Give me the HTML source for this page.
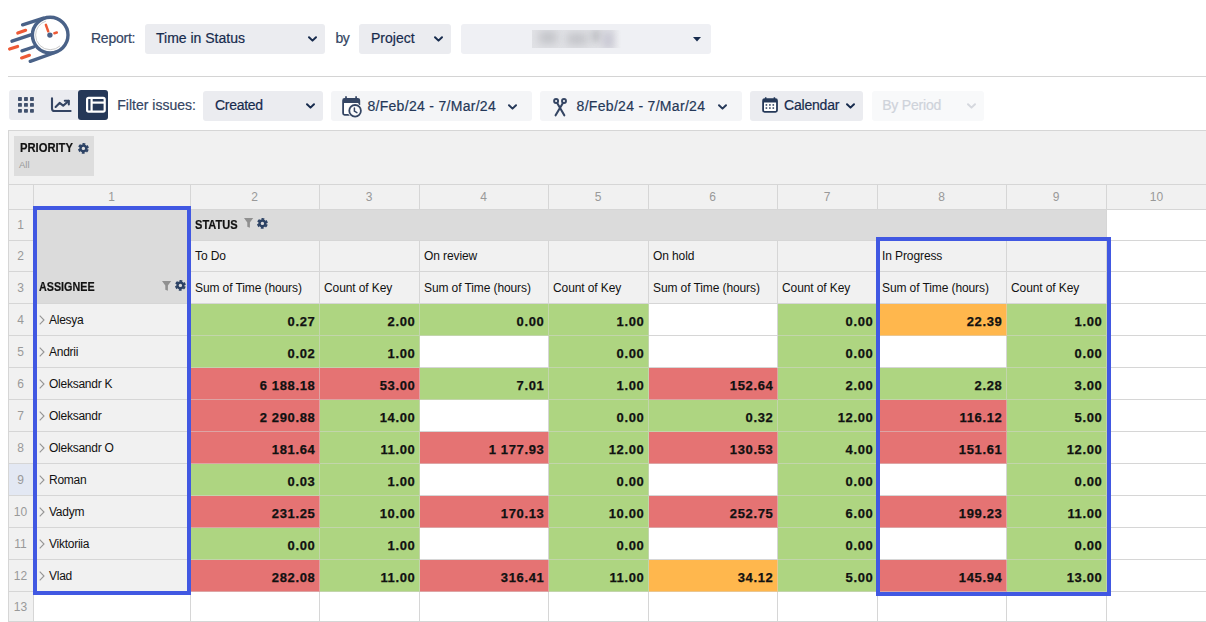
<!DOCTYPE html>
<html lang="en">
<head>
<meta charset="utf-8">
<title>Time in Status report</title>
<style>
html,body{margin:0;padding:0;background:#fff;}
body{width:1206px;height:622px;overflow:hidden;position:relative;font-family:"Liberation Sans",sans-serif;color:#172b4d;}
.t{position:absolute;font-size:14px;line-height:16px;white-space:nowrap;color:#344563;-webkit-text-stroke:.2px currentColor}
.sel1{position:absolute;background:#ebecf0;border-radius:3px;}
.sel2{position:absolute;background:#f4f5f7;border-radius:3px;}
svg{position:absolute;overflow:visible}
#hr{position:absolute;left:8px;top:76px;width:1198px;height:1px;background:#d4d4d4}
#grid{position:absolute;left:8px;top:130px;width:1198px;height:492px;background:#d6d6d6;}
#grid .c{position:absolute;}
.c{position:absolute;box-sizing:border-box;font-size:12px;color:#111;white-space:nowrap;overflow:hidden}
#grid .c{margin-left:-8px;margin-top:-130px}
.num{color:#999;text-align:center;line-height:25px;font-size:12px;text-indent:-1px}
.h{line-height:33px;padding-left:4px;letter-spacing:-0.1px}
.v{font-weight:700;font-size:13px;letter-spacing:.65px;-webkit-text-stroke:.25px #111;text-align:right;padding-right:3.5px;line-height:36px;color:#111}
.nm{line-height:32px}
.nm span{position:absolute;left:15px;top:0;letter-spacing:-0.25px}
.nm .chev{left:5px;top:11px}
.b{-webkit-text-stroke:.2px #111;font-weight:700;position:absolute;font-size:12.5px;color:#111;transform-origin:0 50%;line-height:14px}
.pri{left:5.6px;top:5.3px;transform:scaleX(.896)}
.all{position:absolute;left:5px;top:23px;font-size:9.5px;color:#999}
.asg{left:4.6px;top:70.3px;transform:scaleX(.86)}
.sts{left:4.3px;top:8.3px;transform:scaleX(.885)}
.sel{position:absolute;box-sizing:border-box;border:4px solid #4158e2}
</style>
</head>
<body>
<svg width="0" height="0" style="position:absolute"><defs>
<g id="gear"><circle cx="12" cy="12" r="6.5" fill="none" stroke="#2c4264" stroke-width="5.4"/><circle cx="12" cy="12" r="10.1" fill="none" stroke="#2c4264" stroke-width="3.8" stroke-dasharray="6.2 4.376" stroke-dashoffset="-2.19"/></g>
<path id="flt" d="M0 0H9.2L5.9 4.6V9.7L3.3 8.7V4.6Z" fill="#909090"/>
<path id="chv" d="M1 1.2L4.5 4.6L8 1.2" fill="none" stroke-width="2" stroke-linecap="round" stroke-linejoin="round"/>
</defs></svg>

<!-- logo -->
<svg id="logo" style="left:0;top:0" width="80" height="76" viewBox="0 0 80 76">
 <g fill="none" stroke="#4a6288" stroke-width="3.4" stroke-linecap="round">
  <circle cx="50.2" cy="35.1" r="17.8"/>
  <path d="M22.6 24.8L43.5 18.2"/>
  <path d="M12 41.2L31.5 34.6"/>
  <path d="M22 50.8L33.5 47"/>
  <path d="M30.2 61.3L55 52.5"/>
 </g>
 <circle cx="50.2" cy="35.1" r="14.6" fill="none" stroke="#bdbdbd" stroke-width="0.8" stroke-dasharray="52 40" stroke-dashoffset="-12"/>
 <g fill="none" stroke="#ee5a36" stroke-width="3.2" stroke-linecap="round">
  <path d="M17.8 33.1L25.6 30.3"/>
  <path d="M9.6 49.1L17.6 46.4"/>
  <path d="M21.6 57.9L29.4 55.3"/>
 </g>
 <g fill="none" stroke="#ee5a36" stroke-width="2.5" stroke-linecap="round">
  <path d="M45.9 24.9L48.2 31.3"/>
  <path d="M54.4 33.2L56.8 32.5"/>
 </g>
 <circle cx="49.9" cy="35.1" r="2.7" fill="#4a6288"/>
</svg>

<div class="t" style="left:91px;top:30px;letter-spacing:-.25px">Report:</div>
<div class="sel1" style="left:145px;top:24px;width:179.5px;height:29.5px"></div>
<div class="t" style="left:156px;top:30px;color:#172b4d">Time in Status</div>
<svg style="left:307.5px;top:35.5px" width="9" height="6" viewBox="0 0 9 6"><use href="#chv" stroke="#172b4d"/></svg>
<div class="t" style="left:335.5px;top:30px;letter-spacing:-.5px">by</div>
<div class="sel1" style="left:359px;top:24px;width:92px;height:29.5px"></div>
<div class="t" style="left:371px;top:30px;color:#172b4d">Project</div>
<svg style="left:434px;top:35.5px" width="9" height="6" viewBox="0 0 9 6"><use href="#chv" stroke="#172b4d"/></svg>
<div class="sel1" style="left:461px;top:24px;width:250px;height:29.5px;background:#eff0f4"></div>
<div style="position:absolute;left:532px;top:30px;width:89px;height:18px;overflow:hidden;background:linear-gradient(90deg,#e1e2e6 0,#e1e2e6 90%,#eff0f4 100%)">
<div style="position:absolute;left:7px;top:1px;width:18px;height:13px;background:#c3c4c9;filter:blur(4px)"></div>
<div style="position:absolute;left:35px;top:3px;width:20px;height:12px;background:#c3c4c9;filter:blur(4px)"></div>
<div style="position:absolute;left:59px;top:0px;width:10px;height:12px;background:#c0c1c6;filter:blur(3.5px)"></div>
<div style="position:absolute;left:71px;top:2px;width:10px;height:16px;background:#c9c8d4;filter:blur(3.5px)"></div>
</div>
<svg style="left:692.5px;top:37px" width="8" height="4.4" viewBox="0 0 8 4.4"><path d="M0 0H8L4 4.4Z" fill="#172b4d"/></svg>

<div id="hr"></div>

<!-- toolbar row 2 -->
<div class="sel1" style="left:9px;top:90px;width:99px;height:30px"></div>
<div style="position:absolute;left:78px;top:90px;width:30px;height:30px;background:#253858;border-radius:3px"></div>
<svg style="left:18.2px;top:97.2px" width="16" height="16" viewBox="0 0 16 16"><g fill="#42526e">
<rect x="0" y="0" width="3.9" height="3.9" rx=".7"/><rect x="6" y="0" width="3.9" height="3.9" rx=".7"/><rect x="12" y="0" width="3.9" height="3.9" rx=".7"/>
<rect x="0" y="5.95" width="3.9" height="3.9" rx=".7"/><rect x="6" y="5.95" width="3.9" height="3.9" rx=".7"/><rect x="12" y="5.95" width="3.9" height="3.9" rx=".7"/>
<rect x="0" y="11.9" width="3.9" height="3.9" rx=".7"/><rect x="6" y="11.9" width="3.9" height="3.9" rx=".7"/><rect x="12" y="11.9" width="3.9" height="3.9" rx=".7"/></g></svg>
<svg style="left:50px;top:96px" width="24" height="18" viewBox="50 96 24 18"><g fill="none" stroke="#344563" stroke-width="2.1" stroke-linecap="round" stroke-linejoin="round">
<path d="M52 98.2V108.4Q52 111 54.6 111H70.6"/><path d="M55.6 107L59.6 102.9L63.2 105.7L68.6 100.9"/><path d="M64.8 100.8H68.8V104.4"/></g></svg>
<svg style="left:84px;top:95px" width="24" height="20" viewBox="84 95 24 20"><g fill="none" stroke="#fff" stroke-width="2.2">
<rect x="87.1" y="97.9" width="17.6" height="13.7" rx="1.6"/><path d="M91.6 98V111.6"/><path d="M91.6 102.6H104.7"/></g></svg>

<div class="t" style="left:117.3px;top:97px">Filter issues:</div>
<div class="sel1" style="left:203px;top:91px;width:120px;height:29.5px"></div>
<div class="t" style="left:215px;top:97px;color:#172b4d;letter-spacing:-.3px">Created</div>
<svg style="left:306px;top:102.7px" width="9" height="6" viewBox="0 0 9 6"><use href="#chv" stroke="#172b4d"/></svg>

<div class="sel2" style="left:331px;top:91px;width:200.5px;height:30px"></div>
<svg style="left:340px;top:94px" width="26" height="26" viewBox="340 94 26 26"><g fill="none" stroke="#344563" stroke-width="1.8" stroke-linejoin="round">
<rect x="343.1" y="98.9" width="16.2" height="15.9" rx="1.5" fill="#fff" stroke="none"/><path d="M351 114.8H344.6Q343.1 114.8 343.1 113.3V100.4Q343.1 98.9 344.6 98.9H357.8Q359.3 98.9 359.3 100.4V105"/>
<path d="M346 96.2V99M356.1 96.2V99" stroke-width="1.7"/>
<path d="M343.1 101H359.3" stroke-width="4"/>
<circle cx="355.1" cy="110.8" r="7.4" fill="#f4f5f7" stroke="none"/><circle cx="355.1" cy="110.8" r="5.8" fill="#fbfbfc"/>
<path d="M354.4 108V111.2L356.9 112.6" stroke-width="1.5" stroke-linecap="round"/></g></svg>
<div class="t" style="left:367.4px;top:97.5px;letter-spacing:.3px;color:#253858">8/Feb/24 - 7/Mar/24</div>
<svg style="left:508px;top:104.4px" width="9" height="6" viewBox="0 0 9 6"><use href="#chv" stroke="#253858"/></svg>

<div class="sel2" style="left:540px;top:91px;width:202px;height:30px"></div>
<svg style="left:550px;top:95px" width="20" height="24" viewBox="550 95 20 24"><g fill="none" stroke="#344563" stroke-linecap="round">
<circle cx="556.1" cy="101" r="2" stroke-width="1.9"/><circle cx="564" cy="101" r="2" stroke-width="1.9"/>
<path d="M557.3 103.3L564.3 115.3M562.8 103.3L555.6 115.3" stroke-width="2.1"/></g></svg>
<div class="t" style="left:576.6px;top:97.5px;letter-spacing:.3px;color:#253858">8/Feb/24 - 7/Mar/24</div>
<svg style="left:717.6px;top:104.4px" width="9" height="6" viewBox="0 0 9 6"><use href="#chv" stroke="#253858"/></svg>

<div class="sel1" style="left:750px;top:91px;width:113px;height:30px"></div>
<svg style="left:760px;top:95px" width="20" height="20" viewBox="760 95 20 20"><g fill="none" stroke="#253858" stroke-width="1.8" stroke-linejoin="round">
<rect x="763.1" y="99.2" width="13.9" height="12.6" rx="1.5" fill="#fff"/><path d="M763.1 100.9H777" stroke-width="3.2"/><path d="M765.7 97.2V99.4M774.4 97.2V99.4" stroke-width="1.5"/></g>
<g fill="#253858"><rect x="765.6" y="104.2" width="1.6" height="1.5"/><rect x="769.1" y="104.2" width="1.6" height="1.5"/><rect x="772.5" y="104.2" width="1.6" height="1.5"/>
<rect x="765.6" y="107.3" width="1.6" height="1.5"/><rect x="769.1" y="107.3" width="1.6" height="1.5"/><rect x="772.5" y="107.3" width="1.6" height="1.5"/></g></svg>
<div class="t" style="left:784px;top:96.5px;color:#172b4d;letter-spacing:-.2px">Calendar</div>
<svg style="left:846px;top:102.7px" width="9" height="6" viewBox="0 0 9 6"><use href="#chv" stroke="#172b4d"/></svg>

<div class="sel2" style="left:871.5px;top:91px;width:112px;height:30px;background:#f8f9fa"></div>
<div class="t" style="left:882.2px;top:96.5px;color:#cfd3da;letter-spacing:-.2px">By Period</div>
<svg style="left:966.5px;top:102.7px" width="9" height="6" viewBox="0 0 9 6"><use href="#chv" stroke="#d5d8de"/></svg>

<div id="grid">
<div class="c " style="left:9px;top:131px;width:1200px;height:53px;background:#f1f1f1;"></div>
<div class="c chip" style="left:14px;top:136px;width:80px;height:40px;background:#dddddd;"><span class="b pri">PRIORITY</span><svg class="gear" style="left:64.1px;top:7px" width="10.8" height="10.8" viewBox="0 0 24 24"><use href="#gear"/></svg><span class="all">All</span></div>
<div class="c " style="left:9px;top:185px;width:24px;height:24px;background:#f1f1f1;"></div>
<div class="c num" style="left:34px;top:185px;width:156px;height:24px;background:#f1f1f1;">1</div>
<div class="c num" style="left:191px;top:185px;width:128px;height:24px;background:#f1f1f1;">2</div>
<div class="c num" style="left:320px;top:185px;width:99px;height:24px;background:#f1f1f1;">3</div>
<div class="c num" style="left:420px;top:185px;width:128px;height:24px;background:#f1f1f1;">4</div>
<div class="c num" style="left:549px;top:185px;width:99px;height:24px;background:#f1f1f1;">5</div>
<div class="c num" style="left:649px;top:185px;width:128px;height:24px;background:#f1f1f1;">6</div>
<div class="c num" style="left:778px;top:185px;width:99px;height:24px;background:#f1f1f1;">7</div>
<div class="c num" style="left:878px;top:185px;width:128px;height:24px;background:#f1f1f1;">8</div>
<div class="c num" style="left:1007px;top:185px;width:99px;height:24px;background:#f1f1f1;">9</div>
<div class="c num" style="left:1107px;top:185px;width:100px;height:24px;background:#f1f1f1;">10</div>
<div class="c num rn" style="left:9px;top:210px;width:24px;height:30px;background:#f1f1f1;line-height:31px">1</div>
<div class="c num rn" style="left:9px;top:241px;width:24px;height:30px;background:#f1f1f1;line-height:31px">2</div>
<div class="c num rn" style="left:9px;top:272px;width:24px;height:31px;background:#f1f1f1;line-height:32px">3</div>
<div class="c num rn" style="left:9px;top:304px;width:24px;height:31px;background:#f1f1f1;line-height:32px">4</div>
<div class="c num rn" style="left:9px;top:336px;width:24px;height:31px;background:#f1f1f1;line-height:32px">5</div>
<div class="c num rn" style="left:9px;top:368px;width:24px;height:31px;background:#f1f1f1;line-height:32px">6</div>
<div class="c num rn" style="left:9px;top:400px;width:24px;height:31px;background:#f1f1f1;line-height:32px">7</div>
<div class="c num rn" style="left:9px;top:432px;width:24px;height:31px;background:#f1f1f1;line-height:32px">8</div>
<div class="c num rn" style="left:9px;top:464px;width:24px;height:31px;background:#e3e8f3;line-height:32px">9</div>
<div class="c num rn" style="left:9px;top:496px;width:24px;height:31px;background:#f1f1f1;line-height:32px">10</div>
<div class="c num rn" style="left:9px;top:528px;width:24px;height:31px;background:#f1f1f1;line-height:32px">11</div>
<div class="c num rn" style="left:9px;top:560px;width:24px;height:31px;background:#f1f1f1;line-height:32px">12</div>
<div class="c num rn" style="left:9px;top:592px;width:24px;height:29px;background:#f1f1f1;line-height:30px">13</div>
<div class="c " style="left:34px;top:210px;width:156px;height:93px;background:#dbdbdb;"><span class="b asg">ASSIGNEE</span><svg class="flt" style="left:127.8px;top:70.5px" width="9.2" height="9.7" viewBox="0 0 9.2 9.7"><use href="#flt"/></svg><svg class="gear" style="left:141.1px;top:70.2px" width="10.8" height="10.8" viewBox="0 0 24 24"><use href="#gear"/></svg></div>
<div class="c " style="left:191px;top:210px;width:915px;height:30px;background:#dbdbdb;"><span class="b sts">STATUS</span><svg class="flt" style="left:52.9px;top:8.1px" width="9.2" height="9.7" viewBox="0 0 9.2 9.7"><use href="#flt"/></svg><svg class="gear" style="left:66.4px;top:7.6px" width="10.8" height="10.8" viewBox="0 0 24 24"><use href="#gear"/></svg></div>
<div class="c " style="left:1107px;top:210px;width:100px;height:30px;background:#ffffff;"></div>
<div class="c h" style="left:191px;top:241px;width:128px;height:30px;background:#f1f1f1;line-height:31px">To Do</div>
<div class="c h" style="left:191px;top:272px;width:128px;height:31px;background:#f1f1f1;">Sum of Time (hours)</div>
<div class="c h" style="left:320px;top:241px;width:99px;height:30px;background:#f1f1f1;line-height:31px"></div>
<div class="c h" style="left:320px;top:272px;width:99px;height:31px;background:#f1f1f1;">Count of Key</div>
<div class="c h" style="left:420px;top:241px;width:128px;height:30px;background:#f1f1f1;line-height:31px">On review</div>
<div class="c h" style="left:420px;top:272px;width:128px;height:31px;background:#f1f1f1;">Sum of Time (hours)</div>
<div class="c h" style="left:549px;top:241px;width:99px;height:30px;background:#f1f1f1;line-height:31px"></div>
<div class="c h" style="left:549px;top:272px;width:99px;height:31px;background:#f1f1f1;">Count of Key</div>
<div class="c h" style="left:649px;top:241px;width:128px;height:30px;background:#f1f1f1;line-height:31px">On hold</div>
<div class="c h" style="left:649px;top:272px;width:128px;height:31px;background:#f1f1f1;">Sum of Time (hours)</div>
<div class="c h" style="left:778px;top:241px;width:99px;height:30px;background:#f1f1f1;line-height:31px"></div>
<div class="c h" style="left:778px;top:272px;width:99px;height:31px;background:#f1f1f1;">Count of Key</div>
<div class="c h" style="left:878px;top:241px;width:128px;height:30px;background:#f1f1f1;line-height:31px">In Progress</div>
<div class="c h" style="left:878px;top:272px;width:128px;height:31px;background:#f1f1f1;">Sum of Time (hours)</div>
<div class="c h" style="left:1007px;top:241px;width:99px;height:30px;background:#f1f1f1;line-height:31px"></div>
<div class="c h" style="left:1007px;top:272px;width:99px;height:31px;background:#f1f1f1;">Count of Key</div>
<div class="c " style="left:1107px;top:241px;width:100px;height:30px;background:#ffffff;"></div>
<div class="c " style="left:1107px;top:272px;width:100px;height:31px;background:#ffffff;"></div>
<div class="c nm" style="left:34px;top:304px;width:156px;height:31px;background:#f1f1f1;"><svg class="chev" width="6" height="10" viewBox="0 0 6 10"><path d="M0.7 0.7L5 5L0.7 9.3" fill="none" stroke="#959595" stroke-width="1.1"/></svg><span>Alesya</span></div>
<div class="c v" style="left:191px;top:304px;width:129px;height:32px;background:#aed581;border-right:1px solid #c2d5ab;border-bottom:1px solid #c2d5ab">0.27</div>
<div class="c v" style="left:320px;top:304px;width:100px;height:32px;background:#aed581;border-right:1px solid #c2d5ab;border-bottom:1px solid #c2d5ab">2.00</div>
<div class="c v" style="left:420px;top:304px;width:129px;height:32px;background:#aed581;border-right:1px solid #c2d5ab;border-bottom:1px solid #c2d5ab">0.00</div>
<div class="c v" style="left:549px;top:304px;width:100px;height:32px;background:#aed581;border-right:1px solid #c2d5ab;border-bottom:1px solid #c2d5ab">1.00</div>
<div class="c v" style="left:649px;top:304px;width:128px;height:31px;background:#ffffff;"></div>
<div class="c v" style="left:778px;top:304px;width:100px;height:32px;background:#aed581;border-right:1px solid #c2d5ab;border-bottom:1px solid #c2d5ab">0.00</div>
<div class="c v" style="left:878px;top:304px;width:129px;height:32px;background:#ffb74d;border-right:1px solid #eac691;border-bottom:1px solid #eac691">22.39</div>
<div class="c v" style="left:1007px;top:304px;width:100px;height:32px;background:#aed581;border-right:1px solid #c2d5ab;border-bottom:1px solid #c2d5ab">1.00</div>
<div class="c " style="left:1107px;top:304px;width:100px;height:31px;background:#ffffff;"></div>
<div class="c nm" style="left:34px;top:336px;width:156px;height:31px;background:#f1f1f1;"><svg class="chev" width="6" height="10" viewBox="0 0 6 10"><path d="M0.7 0.7L5 5L0.7 9.3" fill="none" stroke="#959595" stroke-width="1.1"/></svg><span>Andrii</span></div>
<div class="c v" style="left:191px;top:336px;width:129px;height:32px;background:#aed581;border-right:1px solid #c2d5ab;border-bottom:1px solid #c2d5ab">0.02</div>
<div class="c v" style="left:320px;top:336px;width:100px;height:32px;background:#aed581;border-right:1px solid #c2d5ab;border-bottom:1px solid #c2d5ab">1.00</div>
<div class="c v" style="left:420px;top:336px;width:128px;height:31px;background:#ffffff;"></div>
<div class="c v" style="left:549px;top:336px;width:100px;height:32px;background:#aed581;border-right:1px solid #c2d5ab;border-bottom:1px solid #c2d5ab">0.00</div>
<div class="c v" style="left:649px;top:336px;width:128px;height:31px;background:#ffffff;"></div>
<div class="c v" style="left:778px;top:336px;width:100px;height:32px;background:#aed581;border-right:1px solid #c2d5ab;border-bottom:1px solid #c2d5ab">0.00</div>
<div class="c v" style="left:878px;top:336px;width:128px;height:31px;background:#ffffff;"></div>
<div class="c v" style="left:1007px;top:336px;width:100px;height:32px;background:#aed581;border-right:1px solid #c2d5ab;border-bottom:1px solid #c2d5ab">0.00</div>
<div class="c " style="left:1107px;top:336px;width:100px;height:31px;background:#ffffff;"></div>
<div class="c nm" style="left:34px;top:368px;width:156px;height:31px;background:#f1f1f1;"><svg class="chev" width="6" height="10" viewBox="0 0 6 10"><path d="M0.7 0.7L5 5L0.7 9.3" fill="none" stroke="#959595" stroke-width="1.1"/></svg><span>Oleksandr K</span></div>
<div class="c v" style="left:191px;top:368px;width:129px;height:32px;background:#e57373;border-right:1px solid #dda4a4;border-bottom:1px solid #dda4a4">6 188.18</div>
<div class="c v" style="left:320px;top:368px;width:100px;height:32px;background:#e57373;border-right:1px solid #dda4a4;border-bottom:1px solid #dda4a4">53.00</div>
<div class="c v" style="left:420px;top:368px;width:129px;height:32px;background:#aed581;border-right:1px solid #c2d5ab;border-bottom:1px solid #c2d5ab">7.01</div>
<div class="c v" style="left:549px;top:368px;width:100px;height:32px;background:#aed581;border-right:1px solid #c2d5ab;border-bottom:1px solid #c2d5ab">1.00</div>
<div class="c v" style="left:649px;top:368px;width:129px;height:32px;background:#e57373;border-right:1px solid #dda4a4;border-bottom:1px solid #dda4a4">152.64</div>
<div class="c v" style="left:778px;top:368px;width:100px;height:32px;background:#aed581;border-right:1px solid #c2d5ab;border-bottom:1px solid #c2d5ab">2.00</div>
<div class="c v" style="left:878px;top:368px;width:129px;height:32px;background:#aed581;border-right:1px solid #c2d5ab;border-bottom:1px solid #c2d5ab">2.28</div>
<div class="c v" style="left:1007px;top:368px;width:100px;height:32px;background:#aed581;border-right:1px solid #c2d5ab;border-bottom:1px solid #c2d5ab">3.00</div>
<div class="c " style="left:1107px;top:368px;width:100px;height:31px;background:#ffffff;"></div>
<div class="c nm" style="left:34px;top:400px;width:156px;height:31px;background:#f1f1f1;"><svg class="chev" width="6" height="10" viewBox="0 0 6 10"><path d="M0.7 0.7L5 5L0.7 9.3" fill="none" stroke="#959595" stroke-width="1.1"/></svg><span>Oleksandr</span></div>
<div class="c v" style="left:191px;top:400px;width:129px;height:32px;background:#e57373;border-right:1px solid #dda4a4;border-bottom:1px solid #dda4a4">2 290.88</div>
<div class="c v" style="left:320px;top:400px;width:100px;height:32px;background:#aed581;border-right:1px solid #c2d5ab;border-bottom:1px solid #c2d5ab">14.00</div>
<div class="c v" style="left:420px;top:400px;width:128px;height:31px;background:#ffffff;"></div>
<div class="c v" style="left:549px;top:400px;width:100px;height:32px;background:#aed581;border-right:1px solid #c2d5ab;border-bottom:1px solid #c2d5ab">0.00</div>
<div class="c v" style="left:649px;top:400px;width:129px;height:32px;background:#aed581;border-right:1px solid #c2d5ab;border-bottom:1px solid #c2d5ab">0.32</div>
<div class="c v" style="left:778px;top:400px;width:100px;height:32px;background:#aed581;border-right:1px solid #c2d5ab;border-bottom:1px solid #c2d5ab">12.00</div>
<div class="c v" style="left:878px;top:400px;width:129px;height:32px;background:#e57373;border-right:1px solid #dda4a4;border-bottom:1px solid #dda4a4">116.12</div>
<div class="c v" style="left:1007px;top:400px;width:100px;height:32px;background:#aed581;border-right:1px solid #c2d5ab;border-bottom:1px solid #c2d5ab">5.00</div>
<div class="c " style="left:1107px;top:400px;width:100px;height:31px;background:#ffffff;"></div>
<div class="c nm" style="left:34px;top:432px;width:156px;height:31px;background:#f1f1f1;"><svg class="chev" width="6" height="10" viewBox="0 0 6 10"><path d="M0.7 0.7L5 5L0.7 9.3" fill="none" stroke="#959595" stroke-width="1.1"/></svg><span>Oleksandr O</span></div>
<div class="c v" style="left:191px;top:432px;width:129px;height:32px;background:#e57373;border-right:1px solid #dda4a4;border-bottom:1px solid #dda4a4">181.64</div>
<div class="c v" style="left:320px;top:432px;width:100px;height:32px;background:#aed581;border-right:1px solid #c2d5ab;border-bottom:1px solid #c2d5ab">11.00</div>
<div class="c v" style="left:420px;top:432px;width:129px;height:32px;background:#e57373;border-right:1px solid #dda4a4;border-bottom:1px solid #dda4a4">1 177.93</div>
<div class="c v" style="left:549px;top:432px;width:100px;height:32px;background:#aed581;border-right:1px solid #c2d5ab;border-bottom:1px solid #c2d5ab">12.00</div>
<div class="c v" style="left:649px;top:432px;width:129px;height:32px;background:#e57373;border-right:1px solid #dda4a4;border-bottom:1px solid #dda4a4">130.53</div>
<div class="c v" style="left:778px;top:432px;width:100px;height:32px;background:#aed581;border-right:1px solid #c2d5ab;border-bottom:1px solid #c2d5ab">4.00</div>
<div class="c v" style="left:878px;top:432px;width:129px;height:32px;background:#e57373;border-right:1px solid #dda4a4;border-bottom:1px solid #dda4a4">151.61</div>
<div class="c v" style="left:1007px;top:432px;width:100px;height:32px;background:#aed581;border-right:1px solid #c2d5ab;border-bottom:1px solid #c2d5ab">12.00</div>
<div class="c " style="left:1107px;top:432px;width:100px;height:31px;background:#ffffff;"></div>
<div class="c nm" style="left:34px;top:464px;width:156px;height:31px;background:#f1f1f1;"><svg class="chev" width="6" height="10" viewBox="0 0 6 10"><path d="M0.7 0.7L5 5L0.7 9.3" fill="none" stroke="#959595" stroke-width="1.1"/></svg><span>Roman</span></div>
<div class="c v" style="left:191px;top:464px;width:129px;height:32px;background:#aed581;border-right:1px solid #c2d5ab;border-bottom:1px solid #c2d5ab">0.03</div>
<div class="c v" style="left:320px;top:464px;width:100px;height:32px;background:#aed581;border-right:1px solid #c2d5ab;border-bottom:1px solid #c2d5ab">1.00</div>
<div class="c v" style="left:420px;top:464px;width:128px;height:31px;background:#ffffff;"></div>
<div class="c v" style="left:549px;top:464px;width:100px;height:32px;background:#aed581;border-right:1px solid #c2d5ab;border-bottom:1px solid #c2d5ab">0.00</div>
<div class="c v" style="left:649px;top:464px;width:128px;height:31px;background:#ffffff;"></div>
<div class="c v" style="left:778px;top:464px;width:100px;height:32px;background:#aed581;border-right:1px solid #c2d5ab;border-bottom:1px solid #c2d5ab">0.00</div>
<div class="c v" style="left:878px;top:464px;width:128px;height:31px;background:#ffffff;"></div>
<div class="c v" style="left:1007px;top:464px;width:100px;height:32px;background:#aed581;border-right:1px solid #c2d5ab;border-bottom:1px solid #c2d5ab">0.00</div>
<div class="c " style="left:1107px;top:464px;width:100px;height:31px;background:#ffffff;"></div>
<div class="c nm" style="left:34px;top:496px;width:156px;height:31px;background:#f1f1f1;"><svg class="chev" width="6" height="10" viewBox="0 0 6 10"><path d="M0.7 0.7L5 5L0.7 9.3" fill="none" stroke="#959595" stroke-width="1.1"/></svg><span>Vadym</span></div>
<div class="c v" style="left:191px;top:496px;width:129px;height:32px;background:#e57373;border-right:1px solid #dda4a4;border-bottom:1px solid #dda4a4">231.25</div>
<div class="c v" style="left:320px;top:496px;width:100px;height:32px;background:#aed581;border-right:1px solid #c2d5ab;border-bottom:1px solid #c2d5ab">10.00</div>
<div class="c v" style="left:420px;top:496px;width:129px;height:32px;background:#e57373;border-right:1px solid #dda4a4;border-bottom:1px solid #dda4a4">170.13</div>
<div class="c v" style="left:549px;top:496px;width:100px;height:32px;background:#aed581;border-right:1px solid #c2d5ab;border-bottom:1px solid #c2d5ab">10.00</div>
<div class="c v" style="left:649px;top:496px;width:129px;height:32px;background:#e57373;border-right:1px solid #dda4a4;border-bottom:1px solid #dda4a4">252.75</div>
<div class="c v" style="left:778px;top:496px;width:100px;height:32px;background:#aed581;border-right:1px solid #c2d5ab;border-bottom:1px solid #c2d5ab">6.00</div>
<div class="c v" style="left:878px;top:496px;width:129px;height:32px;background:#e57373;border-right:1px solid #dda4a4;border-bottom:1px solid #dda4a4">199.23</div>
<div class="c v" style="left:1007px;top:496px;width:100px;height:32px;background:#aed581;border-right:1px solid #c2d5ab;border-bottom:1px solid #c2d5ab">11.00</div>
<div class="c " style="left:1107px;top:496px;width:100px;height:31px;background:#ffffff;"></div>
<div class="c nm" style="left:34px;top:528px;width:156px;height:31px;background:#f1f1f1;"><svg class="chev" width="6" height="10" viewBox="0 0 6 10"><path d="M0.7 0.7L5 5L0.7 9.3" fill="none" stroke="#959595" stroke-width="1.1"/></svg><span>Viktoriia</span></div>
<div class="c v" style="left:191px;top:528px;width:129px;height:32px;background:#aed581;border-right:1px solid #c2d5ab;border-bottom:1px solid #c2d5ab">0.00</div>
<div class="c v" style="left:320px;top:528px;width:100px;height:32px;background:#aed581;border-right:1px solid #c2d5ab;border-bottom:1px solid #c2d5ab">1.00</div>
<div class="c v" style="left:420px;top:528px;width:128px;height:31px;background:#ffffff;"></div>
<div class="c v" style="left:549px;top:528px;width:100px;height:32px;background:#aed581;border-right:1px solid #c2d5ab;border-bottom:1px solid #c2d5ab">0.00</div>
<div class="c v" style="left:649px;top:528px;width:128px;height:31px;background:#ffffff;"></div>
<div class="c v" style="left:778px;top:528px;width:100px;height:32px;background:#aed581;border-right:1px solid #c2d5ab;border-bottom:1px solid #c2d5ab">0.00</div>
<div class="c v" style="left:878px;top:528px;width:128px;height:31px;background:#ffffff;"></div>
<div class="c v" style="left:1007px;top:528px;width:100px;height:32px;background:#aed581;border-right:1px solid #c2d5ab;border-bottom:1px solid #c2d5ab">0.00</div>
<div class="c " style="left:1107px;top:528px;width:100px;height:31px;background:#ffffff;"></div>
<div class="c nm" style="left:34px;top:560px;width:156px;height:31px;background:#f1f1f1;"><svg class="chev" width="6" height="10" viewBox="0 0 6 10"><path d="M0.7 0.7L5 5L0.7 9.3" fill="none" stroke="#959595" stroke-width="1.1"/></svg><span>Vlad</span></div>
<div class="c v" style="left:191px;top:560px;width:129px;height:32px;background:#e57373;border-right:1px solid #dda4a4;border-bottom:1px solid #dda4a4">282.08</div>
<div class="c v" style="left:320px;top:560px;width:100px;height:32px;background:#aed581;border-right:1px solid #c2d5ab;border-bottom:1px solid #c2d5ab">11.00</div>
<div class="c v" style="left:420px;top:560px;width:129px;height:32px;background:#e57373;border-right:1px solid #dda4a4;border-bottom:1px solid #dda4a4">316.41</div>
<div class="c v" style="left:549px;top:560px;width:100px;height:32px;background:#aed581;border-right:1px solid #c2d5ab;border-bottom:1px solid #c2d5ab">11.00</div>
<div class="c v" style="left:649px;top:560px;width:129px;height:32px;background:#ffb74d;border-right:1px solid #eac691;border-bottom:1px solid #eac691">34.12</div>
<div class="c v" style="left:778px;top:560px;width:100px;height:32px;background:#aed581;border-right:1px solid #c2d5ab;border-bottom:1px solid #c2d5ab">5.00</div>
<div class="c v" style="left:878px;top:560px;width:129px;height:32px;background:#e57373;border-right:1px solid #dda4a4;border-bottom:1px solid #dda4a4">145.94</div>
<div class="c v" style="left:1007px;top:560px;width:100px;height:32px;background:#aed581;border-right:1px solid #c2d5ab;border-bottom:1px solid #c2d5ab">13.00</div>
<div class="c " style="left:1107px;top:560px;width:100px;height:31px;background:#ffffff;"></div>
<div class="c " style="left:34px;top:592px;width:156px;height:29px;background:#ffffff;"></div>
<div class="c " style="left:191px;top:592px;width:128px;height:29px;background:#ffffff;"></div>
<div class="c " style="left:320px;top:592px;width:99px;height:29px;background:#ffffff;"></div>
<div class="c " style="left:420px;top:592px;width:128px;height:29px;background:#ffffff;"></div>
<div class="c " style="left:549px;top:592px;width:99px;height:29px;background:#ffffff;"></div>
<div class="c " style="left:649px;top:592px;width:128px;height:29px;background:#ffffff;"></div>
<div class="c " style="left:778px;top:592px;width:99px;height:29px;background:#ffffff;"></div>
<div class="c " style="left:878px;top:592px;width:128px;height:29px;background:#ffffff;"></div>
<div class="c " style="left:1007px;top:592px;width:99px;height:29px;background:#ffffff;"></div>
<div class="c " style="left:1107px;top:592px;width:100px;height:29px;background:#ffffff;"></div>
</div>
<div class="sel" style="left:33px;top:206px;width:158px;height:389px"></div>
<div class="sel" style="left:876px;top:237px;width:235px;height:359px"></div>
</body>
</html>
